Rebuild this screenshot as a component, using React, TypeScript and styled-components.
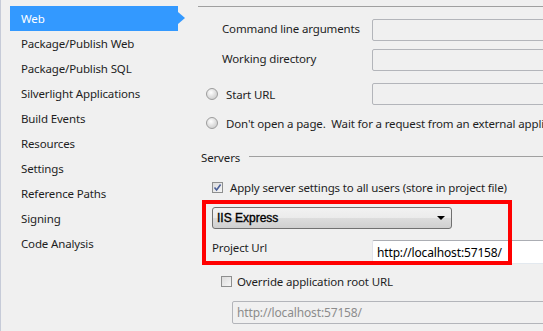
import styled, { createGlobalStyle } from 'styled-components';

const GlobalStyle = createGlobalStyle`
    html, body {
        margin: 0;
        padding: 0;
        background: #f0f0f0;
    }
    body {
        font-family: "Segoe UI", "Noto Sans", "Open Sans", sans-serif;
        font-size: 11.5px;
        letter-spacing: -0.15px;
        color: #1e1e1e;
    }
`;

const Page = styled.div`
    display: flex;
    width: 543px;
    height: 331px;
    overflow: hidden;
    background: #f0f0f0;
`;

const Sidebar = styled.nav`
    flex: 0 0 198px;
    border-left: 1px solid #c6cbd8;
    padding-top: 6px;
    display: flex;
    flex-direction: column;
    box-sizing: border-box;
`;

const NavItem = styled.div<{ $active?: boolean }>`
    position: relative;
    width: 168px;
    height: 25px;
    margin-left: 9px;
    padding-left: 11px;
    box-sizing: border-box;
    display: flex;
    align-items: center;
    background: ${p => (p.$active ? '#3399ff' : 'transparent')};
    color: ${p => (p.$active ? '#ffffff' : '#1e1e1e')};
    white-space: nowrap;

    &::after {
        content: '';
        display: ${p => (p.$active ? 'block' : 'none')};
        position: absolute;
        right: -7px;
        top: 6px;
        border-top: 6px solid transparent;
        border-bottom: 6px solid transparent;
        border-left: 7px solid #3399ff;
    }
`;

const Content = styled.main`
    flex: 1;
    min-width: 0;
    overflow: hidden;
    display: flex;
    flex-direction: column;
`;

const Rule = styled.div`
    height: 1px;
    margin-top: 6px;
    background: #a0a0a0;
`;

const Row = styled.div<{ $top: number; $left: number; $height?: number }>`
    display: flex;
    align-items: center;
    margin-top: ${p => p.$top}px;
    padding-left: ${p => p.$left}px;
    height: ${p => p.$height ?? 16}px;
    white-space: nowrap;
`;

const Label = styled.span<{ $width?: number; $lift?: number }>`
    flex: 0 0 ${p => (p.$width ? `${p.$width}px` : 'auto')};
    margin-top: ${p => (p.$lift ? -p.$lift : 0)}px;
`;

const TextBox = styled.div<{ $white?: boolean; $muted?: boolean; $height?: number }>`
    flex: 0 0 auto;
    width: 320px;
    height: ${p => p.$height ?? 22}px;
    box-sizing: border-box;
    border: 1px solid #abadb3;
    border-color: ${p => (p.$white ? '#abadb3 #dbdfe6 #e3e9ef #e2e3ea' : '#b3b5ba')};
    border-radius: 2px;
    background: ${p => (p.$white ? '#ffffff' : '#f0f0f0')};
    color: ${p => (p.$muted ? '#8c8c8c' : '#000000')};
    padding-left: 4px;
    display: flex;
    align-items: center;
    font-size: 12px;
`;

const Radio = styled.span`
    width: 12px;
    height: 12px;
    border-radius: 50%;
    box-sizing: border-box;
    border: 1px solid #9c9c9c;
    background: radial-gradient(circle at 40% 35%, #ffffff 0%, #e2e2e2 45%, #c4c4c4 100%);
    margin-right: 8px;
    flex: 0 0 auto;
`;

const Check = styled.span<{ $gap: number }>`
    width: 11px;
    height: 11px;
    box-sizing: border-box;
    border: 1px solid #8e8f8f;
    background: linear-gradient(135deg, #dcdcdc 0%, #f6f6f6 100%);
    margin-right: ${p => p.$gap}px;
    flex: 0 0 auto;
    display: flex;
    align-items: center;
    justify-content: center;
`;

const Header = styled.div`
    display: flex;
    align-items: center;
    margin-top: 16px;
    padding-left: 3px;
    height: 16px;

    &::after {
        content: '';
        flex: 1;
        height: 1px;
        margin-left: 9px;
        margin-top: -1px;
        background: #a0a0a0;
    }
`;

const Group = styled.div`
    position: relative;
    margin-top: 5px;
    padding: 7px 0 0 14px;
    height: 65px;
    box-sizing: border-box;

    &::after {
        content: '';
        position: absolute;
        left: 4px;
        top: 0;
        width: 310px;
        height: 65px;
        box-sizing: border-box;
        border: 4px solid #ff0000;
        pointer-events: none;
    }
`;

const Select = styled.div`
    width: 240px;
    height: 22px;
    box-sizing: border-box;
    border: 1px solid #707070;
    border-radius: 3px;
    background: linear-gradient(#f2f2f2 0%, #ebebeb 50%, #dddddd 51%, #cfcfcf 100%);
    display: flex;
    align-items: center;
    justify-content: space-between;
    padding: 0 6px 0 4px;
    font-family: "Liberation Sans", Arial, sans-serif;
    font-size: 12px;
    letter-spacing: 0;
    -webkit-text-stroke: 0.35px #000;
    color: #000;
`;

const Caret = styled.span`
    border-left: 4px solid transparent;
    border-right: 4px solid transparent;
    border-top: 4px solid #000;
`;

const UrlRow = styled.div`
    display: flex;
    align-items: flex-start;
    margin-top: 11px;
    white-space: nowrap;
`;

const navItems = [
    'Web',
    'Package/Publish Web',
    'Package/Publish SQL',
    'Silverlight Applications',
    'Build Events',
    'Resources',
    'Settings',
    'Reference Paths',
    'Signing',
    'Code Analysis',
];

function CheckMark() {
    return (
        <svg width="9" height="9" viewBox="0 0 9 9">
            <path d="M1.5 4.5 L3.6 7 L7.6 1.5" fill="none" stroke="#4a5f97" strokeWidth="1.6" />
        </svg>
    );
}

export default function App() {
    return (
        <Page>
            <GlobalStyle />
            <Sidebar>
                {navItems.map(item => (
                    <NavItem key={item} $active={item === 'Web'}>{item}</NavItem>
                ))}
            </Sidebar>
            <Content>
                <Rule />
                <Row $top={12} $left={24} $height={22}>
                    <Label $width={150} $lift={4}>Command line arguments</Label>
                    <TextBox />
                </Row>
                <Row $top={8} $left={24} $height={22}>
                    <Label $width={150} $lift={4}>Working directory</Label>
                    <TextBox />
                </Row>
                <Row $top={12} $left={8} $height={22}>
                    <Radio />
                    <Label $width={146}>Start URL</Label>
                    <TextBox />
                </Row>
                <Row $top={8} $left={8} $height={20}>
                    <Radio />
                    <Label>Don't open a page.&nbsp; Wait for a request from an external application.</Label>
                </Row>
                <Header>Servers</Header>
                <Row $top={14} $left={14}>
                    <Check $gap={7}><CheckMark /></Check>
                    <Label>Apply server settings to all users (store in project file)</Label>
                </Row>
                <Group>
                    <Select>
                        <span>IIS Express</span>
                        <Caret />
                    </Select>
                    <UrlRow>
                        <Label $width={160}>Project Url</Label>
                        <TextBox $white $height={24}>http://localhost:57158/</TextBox>
                    </UrlRow>
                </Group>
                <Row $top={8} $left={23}>
                    <Check $gap={5} />
                    <Label>Override application root URL</Label>
                </Row>
                <Row $top={12} $left={34} $height={23}>
                    <TextBox $muted $height={23}>http://localhost:57158/</TextBox>
                </Row>
            </Content>
        </Page>
    );
}
